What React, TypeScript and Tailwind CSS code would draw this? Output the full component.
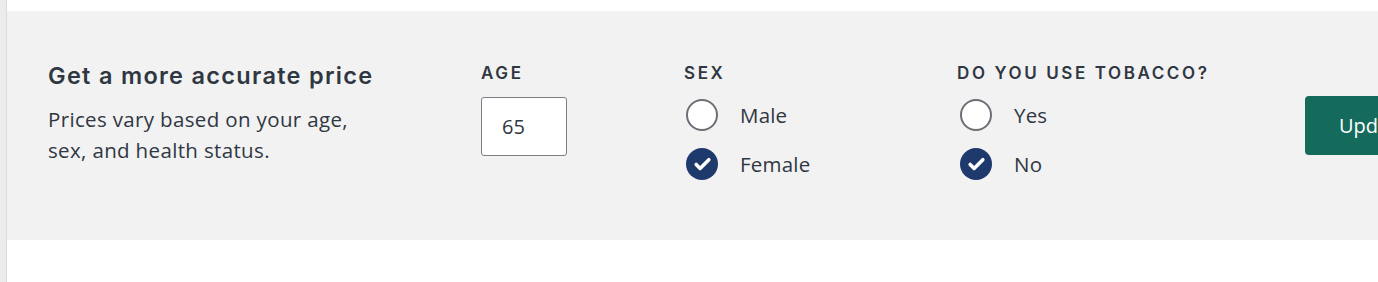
import { Check } from "lucide-react"

const body = { fontFamily: '"Open Sans", "Liberation Sans", sans-serif' }
const display = { fontFamily: 'Inter, "Liberation Sans", sans-serif' }

function Radio({ label, checked }: { label: string; checked?: boolean }) {
  return (
    <label className="flex h-[32px] items-center gap-[22px]">
      {checked ? (
        <span className="flex h-[32px] w-[32px] items-center justify-center rounded-full bg-[#1e3a6d]">
          <Check size={19} strokeWidth={4.5} className="text-white" />
        </span>
      ) : (
        <span className="h-[32px] w-[32px] rounded-full border-2 border-[#6b6f76] bg-white" />
      )}
      <span className="text-[20.5px] tracking-[0.2px] text-[#2f3742]">{label}</span>
    </label>
  )
}

export default function App() {
  return (
    <div className="flex h-[282px] w-[1378px] overflow-hidden bg-white" style={body}>
      <div className="w-[7px] shrink-0 border-r border-[#dcdcdc] bg-[#ececec]" />
      <div className="min-w-0 flex-1">
        <div className="mt-[11px] flex h-[229px] bg-[#f2f2f2] pl-[41px] pt-[50px] text-[#2f3742]">
          <div className="w-[433px] shrink-0">
            <h2 className="text-[23.5px] font-semibold leading-[30px] tracking-[1.3px]" style={display}>
              Get a more accurate price
            </h2>
            <p className="mt-[13px] text-[20.5px] leading-[31px] tracking-[0.35px]">
              Prices vary based on your age,
              <br />
              sex, and health status.
            </p>
          </div>

          <div className="w-[203px] shrink-0">
            <div className="text-[17px] font-semibold uppercase leading-[24px] tracking-[2.6px]" style={display}>
              Age
            </div>
            <input
              defaultValue="65"
              className="mt-[12px] h-[59px] w-[86px] rounded-[3px] border border-[#7a7e85] bg-white px-[20px] text-[20px] text-[#2f3742] outline-none"
            />
          </div>

          <div className="w-[273px] shrink-0">
            <div className="text-[17px] font-semibold uppercase leading-[24px] tracking-[2.6px]" style={display}>
              Sex
            </div>
            <div className="mt-[14px] ml-[2px] flex flex-col gap-[17px]">
              <Radio label="Male" />
              <Radio label="Female" checked />
            </div>
          </div>

          <div className="w-[348px] shrink-0">
            <div className="text-[17px] font-semibold uppercase leading-[24px] tracking-[2.6px]" style={display}>
              Do you use tobacco?
            </div>
            <div className="mt-[14px] ml-[3px] flex flex-col gap-[17px]">
              <Radio label="Yes" />
              <Radio label="No" checked />
            </div>
          </div>

          <div className="shrink-0 pt-[35px]">
            <button className="h-[59px] w-[160px] rounded-[4px] bg-[#156b5b] pl-[34px] text-left text-[20px] text-white">
              Update
            </button>
          </div>
        </div>
      </div>
    </div>
  )
}
